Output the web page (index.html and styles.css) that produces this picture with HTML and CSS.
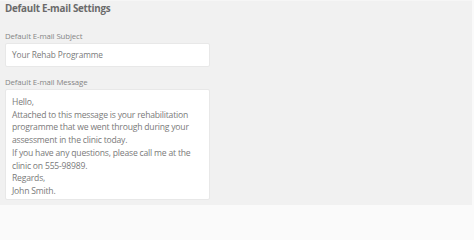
FILE: index.html
```html
<!DOCTYPE html>
<html>
<head>
<meta charset="utf-8">
<link rel="stylesheet" href="styles.css">
</head>
<body>
<section class="panel">
  <h2 class="title">Default E-mail Settings</h2>
  <div class="field">
    <label class="label">Default E-mail Subject</label>
    <div class="input">Your Rehab Programme</div>
  </div>
  <div class="field">
    <label class="label">Default E-mail Message</label>
    <div class="textarea">Hello,<br>Attached to this message is your rehabilitation programme that we went through during your assessment in the clinic today.<br>If you have any questions, please call me at the clinic on 555-98989.<br>Regards,<br>John Smith.</div>
  </div>
</section>
</body>
</html>
```
FILE: styles.css
```css
html, body {
  margin: 0;
  padding: 0;
  background: #fafafa;
}
body {
  width: 474px;
  min-height: 207px;
  font-family: "Open Sans", "Noto Sans", sans-serif;
}
.panel {
  box-sizing: border-box;
  width: 472px;
  height: 205px;
  background: #f1f1f1;
  border-top: 1px solid #f6f6f6;
  padding: 1px 5px 0 5px;
  display: flex;
  flex-direction: column;
}
.title {
  margin: 0;
  font-size: 9.8px;
  font-weight: 700;
  letter-spacing: -0.25px;
  color: #6a6a6a;
  line-height: 14px;
}
.field {
  display: flex;
  flex-direction: column;
  margin-top: 14px;
}
.field + .field {
  margin-top: 9px;
}
.label {
  font-size: 7.8px;
  letter-spacing: -0.1px;
  color: #858585;
  line-height: 12px;
  margin-bottom: 1px;
}
.input, .textarea {
  box-sizing: border-box;
  width: 205px;
  background: #fff;
  border: 1px solid #e8e8e8;
  border-radius: 2px;
  color: #7a7a7a;
  padding: 0 6px;
}
.input {
  height: 24px;
  line-height: 22px;
  font-size: 8.3px;
  letter-spacing: -0.1px;
}
.textarea {
  height: 111px;
  padding-top: 6px;
  font-size: 8.6px;
  letter-spacing: -0.2px;
  line-height: 12.7px;
}
```
